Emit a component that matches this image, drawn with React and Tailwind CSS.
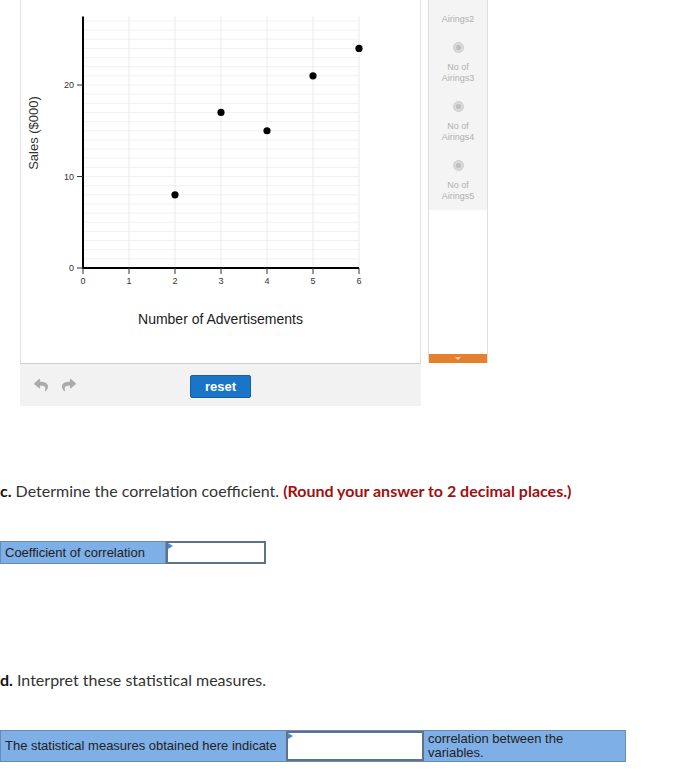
import { FaReply, FaShare } from "react-icons/fa";

const points = [
  [2, 8],
  [3, 17],
  [4, 15],
  [5, 21],
  [6, 24],
];

const X0 = 62;
const XS = 46;
const Y0 = 268;
const YS = 9.15;
const YMAX = 27.5;

const px = (v) => X0 + v * XS;
const py = (v) => Y0 - v * YS;

function Chart() {
  const hLines = [];
  for (let v = 1; v <= 27; v++) hLines.push(v);
  return (
    <svg width="401" height="300" className="block" style={{ fontFamily: "Arial, 'Liberation Sans', sans-serif" }}>
      {hLines.map((v) => (
        <line key={"h" + v} x1={X0} x2={px(6)} y1={py(v)} y2={py(v)} stroke="#f2f2f2" strokeWidth="1" />
      ))}
      {[1, 2, 3, 4, 5, 6].map((v) => (
        <line key={"v" + v} x1={px(v)} x2={px(v)} y1={py(YMAX)} y2={Y0} stroke="#ebebeb" strokeWidth="1" />
      ))}
      <line x1={X0} x2={X0} y1={py(YMAX)} y2={Y0 + 1} stroke="#000" strokeWidth="2" />
      <line x1={X0} x2={px(6)} y1={Y0} y2={Y0} stroke="#000" strokeWidth="2" />
      {[0, 10, 20].map((v) => (
        <g key={"yt" + v}>
          <line x1={X0 - 6} x2={X0} y1={py(v)} y2={py(v)} stroke="#333" strokeWidth="1" />
          <text x={X0 - 9} y={py(v) + 3} fontSize="9" textAnchor="end" fill="#333">
            {v}
          </text>
        </g>
      ))}
      {[0, 1, 2, 3, 4, 5, 6].map((v) => (
        <g key={"xt" + v}>
          <line x1={px(v)} x2={px(v)} y1={Y0} y2={Y0 + 6} stroke="#333" strokeWidth="1" />
          <text x={px(v)} y={Y0 + 16} fontSize="9" textAnchor="middle" fill="#333">
            {v}
          </text>
        </g>
      ))}
      {points.map(([x, y]) => (
        <circle key={x} cx={px(x)} cy={py(y)} r="3.6" fill="#000" />
      ))}
      <text x="17" y="133" fontSize="13" fill="#333" textAnchor="middle" transform="rotate(-90 17 133)">
        Sales ($000)
      </text>
    </svg>
  );
}

function Radio() {
  return (
    <div className="mx-auto w-[11px] h-[11px] rounded-full bg-[#d9d9d9] border border-[#cfcfcf] flex items-center justify-center">
      <div className="w-[5px] h-[5px] rounded-full bg-[#bdbdbd]" />
    </div>
  );
}

function SidePanel() {
  return (
    <div className="w-[60px] h-[363px] ml-[7px] border-x border-[#dedede] flex flex-col text-center text-[9px] leading-[11px] text-[#b0b0b0]">
      <div className="bg-[#f4f4f4] h-[210px] pt-[14px]">
        <div>Airings2</div>
        {["Airings3", "Airings4", "Airings5"].map((n) => (
          <div key={n}>
            <div className="mt-[17px]">
              <Radio />
            </div>
            <div className="mt-[9px]">No of</div>
            <div>{n}</div>
          </div>
        ))}
      </div>
      <div className="flex-1" />
      <div className="h-[9px] bg-[#e5812c] flex justify-center items-center">
        <div className="w-0 h-0 border-x-[3px] border-x-transparent border-t-[3px] border-t-[#f6d2b0]" />
      </div>
    </div>
  );
}

export default function App() {
  return (
    <div className="w-[686px] h-[779px] bg-white overflow-hidden" style={{ fontFamily: "Arial, 'Liberation Sans', sans-serif" }}>
      <div className="flex items-start">
        <div className="ml-[20px] w-[401px]">
          <div className="h-[363px] border-x border-[#e2e2e2]">
            <Chart />
            <div className="text-center text-[14px] text-[#222] mt-[9px]">Number of Advertisements</div>
          </div>
          <div className="h-[43px] bg-[#f2f2f2] border-t border-[#cfcfcf] flex items-center relative">
            <div className="flex items-center gap-[14px] ml-[14px] text-[#ababab]">
              <FaReply size={14} />
              <FaShare size={14} />
            </div>
            <button className="absolute left-[170px] top-[11px] w-[61px] h-[23px] rounded-[2px] bg-[#1a74c8] border border-[#1360a8] text-white font-bold text-[13px] leading-none">
              reset
            </button>
          </div>
        </div>
        <SidePanel />
      </div>

      <div className="mt-[75px] text-[16px] leading-[20px] text-[#333]" style={{ fontFamily: "Lato, 'Open Sans', sans-serif" }}>
        <span className="font-bold text-[#111]">c.</span> Determine the correlation coefficient.{" "}
        <span className="font-bold text-[#a01010]">(Round your answer to 2 decimal places.)</span>
      </div>

      <div className="mt-[40px] flex h-[23px] w-[266px] text-[13px] text-[#222]">
        <div className="w-[166px] bg-[#7eafe6] border border-[#6a8cb0] flex items-center pl-[4px] whitespace-nowrap">Coefficient of correlation</div>
        <div className="relative flex-1 bg-white border-2 border-[#5d7388]">
          <div className="absolute left-0 top-0 w-0 h-0 border-y-[3px] border-y-transparent border-l-[5px] border-l-[#4b86c8]" />
        </div>
      </div>

      <div className="mt-[106px] text-[16px] leading-[20px] text-[#333]" style={{ fontFamily: "Lato, 'Open Sans', sans-serif" }}>
        <span className="font-bold text-[#111]">d.</span> Interpret these statistical measures.
      </div>

      <div className="mt-[40px] flex h-[32px] w-[626px] text-[13px] leading-[14px] text-[#222] bg-[#7eafe6] border border-[#6a8cb0]">
        <div className="w-[285px] flex items-center pl-[4px] whitespace-nowrap">The statistical measures obtained here indicate</div>
        <div className="relative w-[138px] bg-white border-2 border-[#5d7388]">
          <div className="absolute left-0 top-0 w-0 h-0 border-y-[3px] border-y-transparent border-l-[5px] border-l-[#4b86c8]" />
        </div>
        <div className="flex-1 flex items-center pl-[4px]">
          correlation between the
          <br />
          variables.
        </div>
      </div>
    </div>
  );
}
